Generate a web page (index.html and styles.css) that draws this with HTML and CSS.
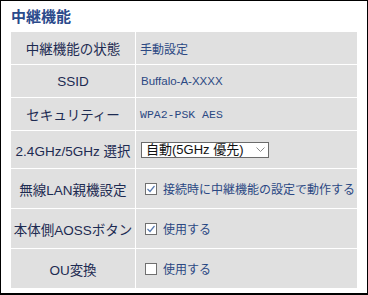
FILE: index.html
```html
<!DOCTYPE html>
<html lang="ja">
<head>
    <meta charset="UTF-8">
    <title>中継機能</title>
    <link rel="stylesheet" href="styles.css">
</head>
<body>
    <div class="frame">
        <h1 class="title">中継機能</h1>

        <div class="settings">
            <div class="label">中継機能の状態</div>
            <div class="value">手動設定</div>

            <div class="label">SSID</div>
            <div class="value latin">Buffalo-A-XXXX</div>

            <div class="label">セキュリティー</div>
            <div class="value mono">WPA2-PSK AES</div>

            <div class="label">2.4GHz/5GHz 選択</div>
            <div class="value">
                <div class="select">
                    <span class="select-text">自動(5GHz 優先)</span>
                    <svg class="chevron" width="9" height="5" viewBox="0 0 9 5">
                        <polyline points="0.5,0.5 4.5,4.5 8.5,0.5" fill="none" stroke="#8a8a8a" stroke-width="1"/>
                    </svg>
                </div>
            </div>

            <div class="label">無線LAN親機設定</div>
            <div class="value">
                <span class="check checked">
                    <svg width="10" height="10" viewBox="0 0 10 10">
                        <polyline points="1.5,5 4,7.5 8.5,2" fill="none" stroke="#5a7bb0" stroke-width="1.2"/>
                    </svg>
                </span>
                <span>接続時に中継機能の設定で動作する</span>
            </div>

            <div class="label">本体側AOSSボタン</div>
            <div class="value">
                <span class="check checked">
                    <svg width="10" height="10" viewBox="0 0 10 10">
                        <polyline points="1.5,5 4,7.5 8.5,2" fill="none" stroke="#5a7bb0" stroke-width="1.2"/>
                    </svg>
                </span>
                <span>使用する</span>
            </div>

            <div class="label">OU変換</div>
            <div class="value">
                <span class="check"></span>
                <span>使用する</span>
            </div>
        </div>
    </div>
</body>
</html>
```

FILE: styles.css
```css
body {
    margin: 0;
    background-color: #fff;
    font-family: 'Liberation Sans', 'Noto Sans CJK JP', sans-serif;
}
.frame {
    box-sizing: border-box;
    width: 368px;
    height: 295px;
    border: 1px solid #000;
    border-bottom-width: 2px;
    padding: 0 10px;
}
.title {
    margin: 0;
    height: 31px;
    line-height: 29px;
    font-size: 15px;
    font-weight: bold;
    color: #2a4a8b;
    font-family: 'Noto Sans CJK JP', sans-serif;
}
.settings {
    display: grid;
    grid-template-columns: 124px 221px;
    grid-template-rows: 32px 32px 32px 37px 39px 39px 39px;
    gap: 1px;
}
.label {
    background-color: #e0e0e0;
    color: #1d2b52;
    font-size: 13.5px;
    display: flex;
    align-items: center;
    justify-content: center;
    white-space: nowrap;
}
.value {
    background-color: #e0e0e0;
    color: #2b4883;
    font-size: 12px;
    display: flex;
    align-items: center;
    padding-left: 4px;
    white-space: nowrap;
}
.latin {
    font-size: 11.5px;
    padding-left: 5px;
}
.mono {
    font-family: 'Liberation Mono', 'Noto Sans CJK JP', monospace;
    font-size: 11.5px;
}
.select {
    box-sizing: border-box;
    width: 128px;
    height: 16px;
    margin-left: 1px;
    border: 1px solid #6b6b6b;
    background-color: #fff;
    display: flex;
    align-items: center;
    justify-content: space-between;
    padding: 0 3px 0 4px;
    color: #111;
    font-size: 13px;
}
.select-text {
    line-height: 14px;
}
.chevron {
    display: block;
}
.check {
    box-sizing: border-box;
    width: 12px;
    height: 12px;
    margin: 0 6px 0 5px;
    border: 1px solid #707070;
    background-color: #fff;
    display: flex;
    align-items: center;
    justify-content: center;
}
.check svg {
    display: block;
}
```
